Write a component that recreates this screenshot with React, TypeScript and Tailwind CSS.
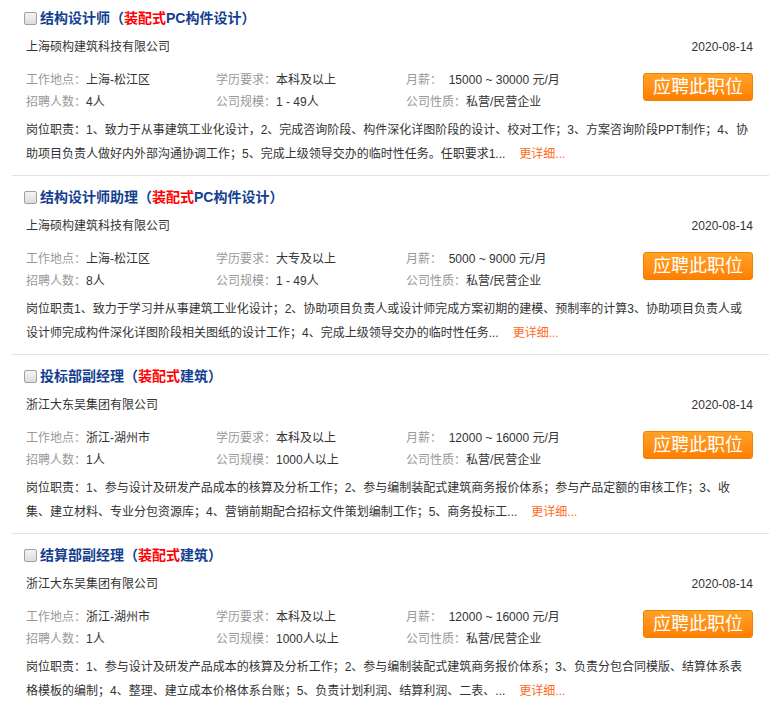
import React from "react";

type Job = {
  id: number;
  title: string;
  tag: string;
  tail: string;
  company: string;
  date: string;
  city: string;
  edu: string;
  salary: string;
  count: string;
  scale: string;
  nature: string;
  desc: string;
};

const jobs: Job[] = [
  {
    id: 1,
    title: "结构设计师",
    tag: "装配式",
    tail: "PC构件设计",
    company: "上海硕构建筑科技有限公司",
    date: "2020-08-14",
    city: "上海-松江区",
    edu: "本科及以上",
    salary: "15000 ~ 30000 元/月",
    count: "4人",
    scale: "1 - 49人",
    nature: "私营/民营企业",
    desc: "岗位职责：1、致力于从事建筑工业化设计，2、完成咨询阶段、构件深化详图阶段的设计、校对工作；3、方案咨询阶段PPT制作；4、协助项目负责人做好内外部沟通协调工作；5、完成上级领导交办的临时性任务。任职要求1...",
  },
  {
    id: 2,
    title: "结构设计师助理",
    tag: "装配式",
    tail: "PC构件设计",
    company: "上海硕构建筑科技有限公司",
    date: "2020-08-14",
    city: "上海-松江区",
    edu: "大专及以上",
    salary: "5000 ~ 9000 元/月",
    count: "8人",
    scale: "1 - 49人",
    nature: "私营/民营企业",
    desc: "岗位职责1、致力于学习并从事建筑工业化设计；2、协助项目负责人或设计师完成方案初期的建模、预制率的计算3、协助项目负责人或设计师完成构件深化详图阶段相关图纸的设计工作；4、完成上级领导交办的临时性任务...",
  },
  {
    id: 3,
    title: "投标部副经理",
    tag: "装配式",
    tail: "建筑",
    company: "浙江大东吴集团有限公司",
    date: "2020-08-14",
    city: "浙江-湖州市",
    edu: "本科及以上",
    salary: "12000 ~ 16000 元/月",
    count: "1人",
    scale: "1000人以上",
    nature: "私营/民营企业",
    desc: "岗位职责：1、参与设计及研发产品成本的核算及分析工作；2、参与编制装配式建筑商务报价体系；参与产品定额的审核工作；3、收集、建立材料、专业分包资源库；4、营销前期配合招标文件策划编制工作；5、商务投标工...",
  },
  {
    id: 4,
    title: "结算部副经理",
    tag: "装配式",
    tail: "建筑",
    company: "浙江大东吴集团有限公司",
    date: "2020-08-14",
    city: "浙江-湖州市",
    edu: "本科及以上",
    salary: "12000 ~ 16000 元/月",
    count: "1人",
    scale: "1000人以上",
    nature: "私营/民营企业",
    desc: "岗位职责：1、参与设计及研发产品成本的核算及分析工作；2、参与编制装配式建筑商务报价体系；3、负责分包合同模版、结算体系表格模板的编制；4、整理、建立成本价格体系台账；5、负责计划利润、结算利润、二表、...",
  },
];

function Field({ label, value }: { label: string; value: string }) {
  return (
    <div className="w-[190px] h-[22px] leading-[22px] whitespace-nowrap">
      <span className="text-[#999]">{label}</span>
      <span className="text-[#333]">{value}</span>
    </div>
  );
}

function JobItem({ job, first }: { job: Job; first: boolean }) {
  return (
    <div className={`mx-[12px] pl-[14px] pr-[16px] pb-[9px] border-b border-[#e2e2e2] ${first ? "pt-[8px]" : "pt-[11px]"}`}>
      {/* 标题 */}
      <div className="flex items-center h-[20px]">
        <span className="w-[13px] h-[13px] mr-[3px] -ml-[2px] rounded-[2px] border border-[#a0a0a0] bg-gradient-to-b from-[#f4f4f4] to-[#dcdcdc]" />
        <span className="text-[14px] font-bold text-[#143f90] leading-[20px]">
          {job.title}（<span className="text-[#ff0000]">{job.tag}</span>
          {job.tail}）
        </span>
      </div>

      {/* 公司 + 日期 */}
      <div className="mt-[9px] flex justify-between h-[20px] leading-[20px] text-[12px] text-[#333]">
        <span>{job.company}</span>
        <span>{job.date}</span>
      </div>

      {/* 职位信息 */}
      <div className="mt-[12px] flex justify-between items-start text-[12px]">
        <div>
          <div className="flex">
            <Field label="工作地点：" value={job.city} />
            <Field label="学历要求：" value={job.edu} />
            <Field label="月薪：" value={"\u00a0 " + job.salary} />
          </div>
          <div className="flex">
            <Field label="招聘人数：" value={job.count} />
            <Field label="公司规模：" value={job.scale} />
            <Field label="公司性质：" value={job.nature} />
          </div>
        </div>
        <button className="mt-[4px] w-[110px] h-[28px] rounded-[3px] border border-[#f08000] bg-gradient-to-b from-[#ffa224] to-[#ff7e00] text-white text-[18px] leading-[26px]">
          应聘此职位
        </button>
      </div>

      {/* 岗位描述 */}
      <p className="mt-[5px] text-[12px] leading-[24px] text-[#333] pr-[4px]">
        {job.desc}
        <a className="inline-block ml-[14px] text-[#ff6a1a] cursor-pointer">更详细...</a>
      </p>
    </div>
  );
}

export default function App() {
  return (
    <div
      className="w-[781px] h-[710px] bg-white overflow-hidden"
      style={{ fontFamily: '"Liberation Sans", "Noto Sans CJK SC", sans-serif' }}
    >
      {jobs.map((job, i) => (
        <JobItem key={job.id} job={job} first={i === 0} />
      ))}
    </div>
  );
}
